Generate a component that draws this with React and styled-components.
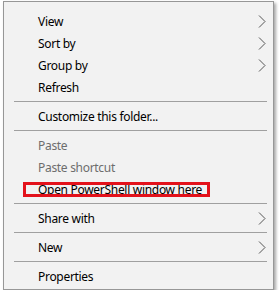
import React from "react";
import styled, { createGlobalStyle } from "styled-components";

const GlobalStyle = createGlobalStyle`
  body {
    margin: 0;
    background: #fff;
    font-family: "Noto Sans", "Open Sans", sans-serif;
  }
`;

const Menu = styled.ul`
  list-style: none;
  margin: 1px 0 0 3px;
  padding: 8px 0 2px;
  width: 269px;
  background: #f2f2f2;
  border: 1px solid #979797;
  box-shadow: 2px 2px 3px rgba(0, 0, 0, 0.35);
  font-size: 12px;
  letter-spacing: -0.3px;
  color: #000;
`;

const Item = styled.li`
  position: relative;
  display: flex;
  align-items: center;
  height: 22px;
  padding: 0 7px 0 34px;
  color: ${(p) => (p.disabled ? "#6d6d6d" : "#000")};
  white-space: nowrap;

  ${(p) =>
    p.marked &&
    `
    &::after {
      content: "";
      position: absolute;
      left: 19px;
      top: 4px;
      width: 187px;
      height: 15px;
      box-sizing: border-box;
      border: 3px solid #e3121b;
    }
  `}
`;

const Label = styled.span`
  flex: 1;
`;

const Separator = styled.li`
  height: 1px;
  margin: 3px 6px 3px 10px;
  background: #a0a0a0;
`;

const Chevron = () => (
  <svg width="8" height="13" viewBox="0 0 8 13">
    <path d="M1 0.5 L7 6.5 L1 12.5" fill="none" stroke="#444" strokeWidth="0.9" />
  </svg>
);

const entries = [
  { label: "View", sub: true },
  { label: "Sort by", sub: true },
  { label: "Group by", sub: true },
  { label: "Refresh" },
  "sep",
  { label: "Customize this folder..." },
  "sep",
  { label: "Paste", disabled: true },
  { label: "Paste shortcut", disabled: true },
  { label: "Open PowerShell window here", marked: true },
  "sep",
  { label: "Share with", sub: true },
  "sep",
  { label: "New", sub: true },
  "sep",
  { label: "Properties" },
];

export default function App() {
  return (
    <>
      <GlobalStyle />
      <Menu>
        {entries.map((e, i) =>
          e === "sep" ? (
            <Separator key={i} />
          ) : (
            <Item key={i} disabled={e.disabled} marked={e.marked}>
              <Label>{e.label}</Label>
              {e.sub && <Chevron />}
            </Item>
          )
        )}
      </Menu>
    </>
  );
}
